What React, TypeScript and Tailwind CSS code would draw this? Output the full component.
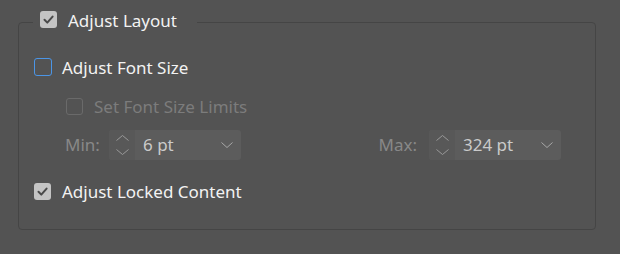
import React from "react";

const font = { fontFamily: '"Noto Sans", "Open Sans", sans-serif' };

function Check({ variant }: { variant: "checked" | "blue" | "disabled" }) {
  if (variant === "checked") {
    return (
      <span className="flex h-[17px] w-[17px] shrink-0 items-center justify-center rounded-[3px] bg-[#c4c4c4]">
        <svg width="17" height="17" viewBox="0 0 17 17">
          <path d="M4.5 8.8 L7.3 11.6 L12.6 5.6" fill="none" stroke="#4a4a4a" strokeWidth="2" strokeLinecap="round" strokeLinejoin="round" />
        </svg>
      </span>
    );
  }
  if (variant === "blue") {
    return <span className="h-[18px] w-[18px] shrink-0 rounded-[3px] border-[1.5px] border-[#4b95e6]" />;
  }
  return <span className="h-[17px] w-[17px] shrink-0 rounded-[3px] border border-[#6a6a6a]" />;
}

function Spinner({ value }: { value: string }) {
  return (
    <div className="flex h-[30px] w-[132px] items-stretch rounded-[3px] bg-[#5c5c5c]">
      <div className="flex w-[26px] flex-col items-center justify-center gap-[8px] rounded-l-[3px] bg-[#585858]">
        <svg width="13" height="6" viewBox="0 0 13 6">
          <path d="M0.5 5.5 L6.5 0.5 L12.5 5.5" fill="none" stroke="#9a9a9a" strokeWidth="1" />
        </svg>
        <svg width="13" height="6" viewBox="0 0 13 6">
          <path d="M0.5 0.5 L6.5 5.5 L12.5 0.5" fill="none" stroke="#9a9a9a" strokeWidth="1" />
        </svg>
      </div>
      <div className="flex flex-1 items-center pl-[8px] pr-[8px] text-[17px] leading-[20px] text-[#cacaca]">
        <span className="flex-1">{value}</span>
        <svg width="12" height="6" viewBox="0 0 12 6">
          <path d="M0.5 0.5 L6 5.5 L11.5 0.5" fill="none" stroke="#a8a8a8" strokeWidth="1" />
        </svg>
      </div>
    </div>
  );
}

export default function App() {
  return (
    <div className="h-[254px] w-[620px] overflow-hidden bg-[#535353] pt-[10px] pl-[18px] pr-[24px]" style={font}>
      <fieldset className="rounded-[4px] border border-[#454545] pl-[15px] pr-[34px] pb-[23px]">
        <legend className="ml-[-1px] flex h-[24px] items-start pl-[7px] pr-[20px] pt-[1px]">
          <Check variant="checked" />
          <span className="ml-[11px] text-[17px] leading-[20px] text-[#f2f2f2]">Adjust Layout</span>
        </legend>
        <div className="mt-[18px] flex h-[30px] items-center">
          <Check variant="blue" />
          <span className="ml-[10px] pt-[1px] text-[17px] leading-[20px] text-[#f2f2f2]">Adjust Font Size</span>
        </div>
        <div className="mt-[9px] flex h-[30px] items-center pl-[32px]">
          <Check variant="disabled" />
          <span className="ml-[11px] pt-[1px] text-[17px] leading-[20px] text-[#7c7c7c]">Set Font Size Limits</span>
        </div>
        <div className="mt-[9px] flex h-[30px] items-center justify-between pl-[31px]">
          <div className="flex items-center">
            <span className="w-[44px] text-[17px] leading-[20px] text-[#888888]">Min:</span>
            <Spinner value="6 pt" />
          </div>
          <div className="flex items-center">
            <span className="mr-[12px] text-[17px] leading-[20px] text-[#888888]">Max:</span>
            <Spinner value="324 pt" />
          </div>
        </div>
        <div className="mt-[16px] flex h-[30px] items-center">
          <Check variant="checked" />
          <span className="ml-[11px] pt-[1px] text-[17px] leading-[20px] text-[#f2f2f2]">Adjust Locked Content</span>
        </div>
      </fieldset>
    </div>
  );
}
